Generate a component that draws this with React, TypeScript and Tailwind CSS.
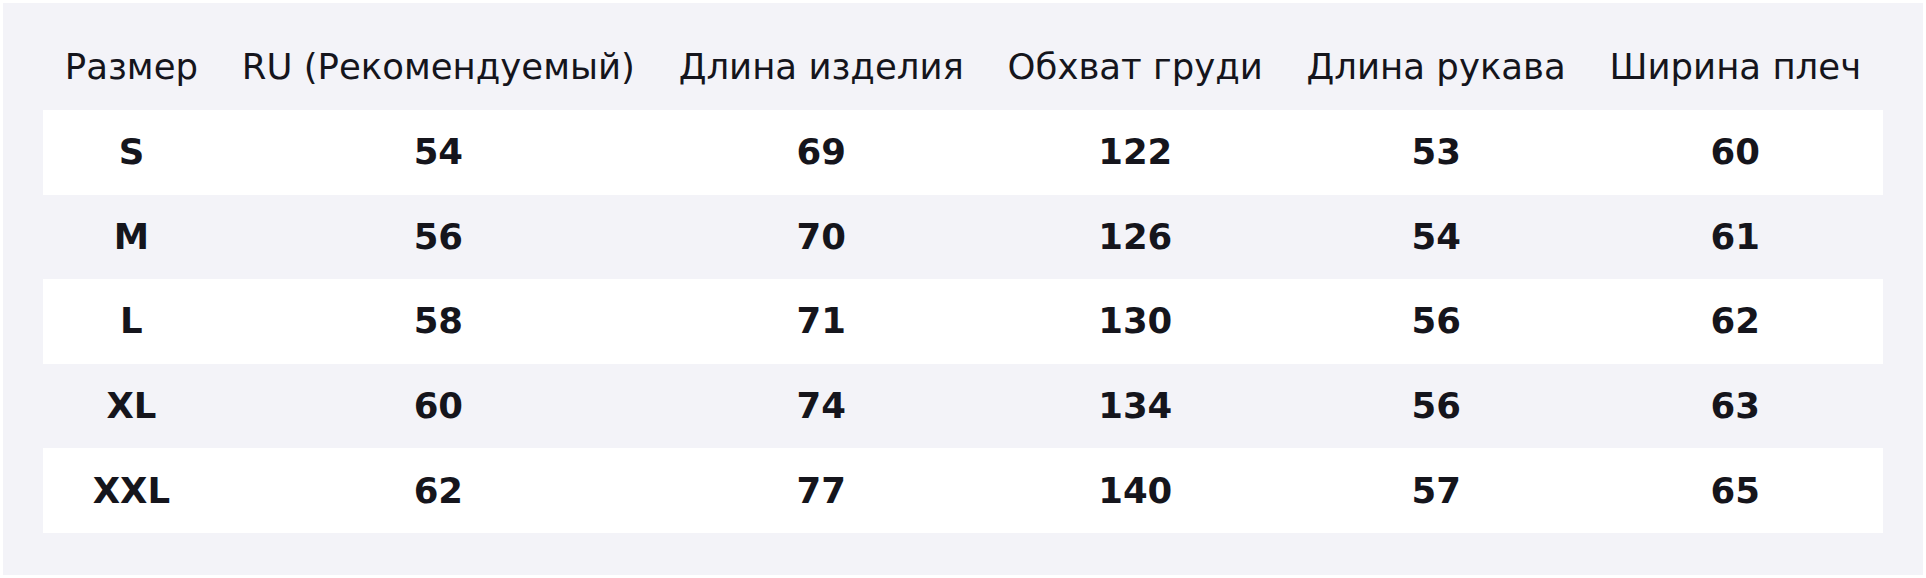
const HEADERS = ["Размер", "RU (Рекомендуемый)", "Длина изделия", "Обхват груди", "Длина рукава", "Ширина плеч"];

const ROWS = [
  ["S", "54", "69", "122", "53", "60"],
  ["M", "56", "70", "126", "54", "61"],
  ["L", "58", "71", "130", "56", "62"],
  ["XL", "60", "74", "134", "56", "63"],
  ["XXL", "62", "77", "140", "57", "65"],
];

export default function App() {
  return (
    <div className="bg-white p-[3px] font-['DejaVu_Sans',sans-serif] text-[#15151c]">
      <div className="bg-[#f3f3f8] px-[40px] pt-[40px] pb-[42px]">
        <table className="w-full border-collapse text-[35.5px] leading-[42px]">
          <thead>
            <tr>
              {HEADERS.map((h) => (
                <th key={h} className="whitespace-nowrap px-[21.8px] pt-[3px] pb-[22px] text-center font-normal">
                  {h}
                </th>
              ))}
            </tr>
          </thead>
          <tbody>
            {ROWS.map((row, i) => (
              <tr key={row[0]} className={i % 2 === 0 ? "bg-white" : "bg-transparent"}>
                {row.map((cell, j) => (
                  <td key={j} className="h-[84.6px] px-[21.8px] py-0 text-center font-bold">
                    {cell}
                  </td>
                ))}
              </tr>
            ))}
          </tbody>
        </table>
      </div>
    </div>
  );
}
